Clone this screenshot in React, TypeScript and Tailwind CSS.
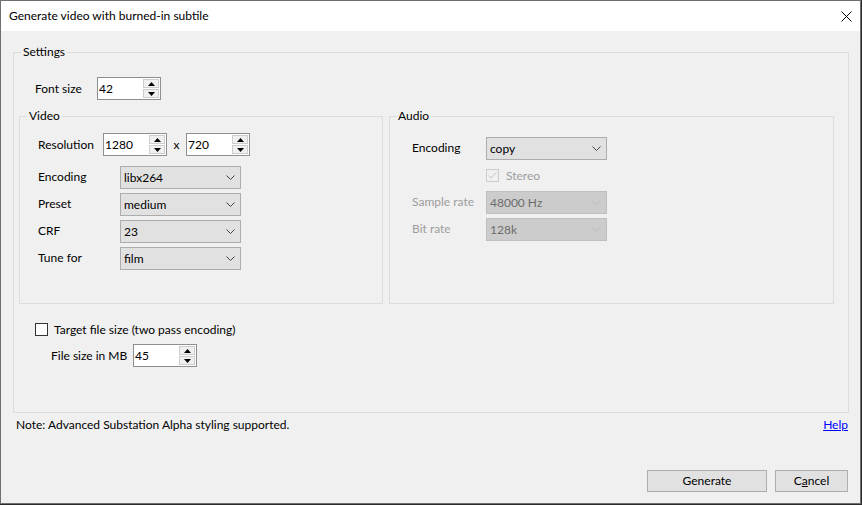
import type { ReactNode } from "react";

function Arrow({ up }: { up?: boolean }) {
  return (
    <svg width="7" height="4" viewBox="0 0 7 4" aria-hidden>
      <path d={up ? "M0 4 L3.5 0 L7 4 Z" : "M0 0 L3.5 4 L7 0 Z"} fill="#000" />
    </svg>
  );
}

function SpinBox({ value }: { value: string }) {
  return (
    <div className="flex h-[23px] w-[64px] border border-[#8f8f8f] bg-white">
      <span className="flex-1 pl-[1px] leading-[21px]">{value}</span>
      <div className="flex w-[17px] flex-col gap-[1px] py-[1px] pr-[1px]">
        <div className="flex flex-1 items-center justify-center border border-[#cdcdcd] bg-[#f0f0f0]">
          <Arrow up />
        </div>
        <div className="flex flex-1 items-center justify-center border border-[#cdcdcd] bg-[#f0f0f0]">
          <Arrow />
        </div>
      </div>
    </div>
  );
}

function Combo({ value, disabled }: { value: string; disabled?: boolean }) {
  return (
    <div
      className={
        disabled
          ? "flex h-[23px] w-[121px] items-center border border-[#bfbfbf] bg-[#cccccc] pl-[3px] pr-[5px] text-[#6d6d6d]"
          : "flex h-[23px] w-[121px] items-center border border-[#adadad] bg-[#e1e1e1] pl-[3px] pr-[5px]"
      }
    >
      <span className="flex-1 leading-[21px]">{value}</span>
      <svg width="9" height="5" viewBox="0 0 9 5" aria-hidden>
        <path d="M0.5 0.5 L4.5 4.5 L8.5 0.5" fill="none" stroke={disabled ? "#bcbcbc" : "#444"} strokeWidth="1" />
      </svg>
    </div>
  );
}

function Row({ label, children, w, muted }: { label: string; children: ReactNode; w: string; muted?: boolean }) {
  return (
    <div className="flex items-center">
      <span className={`${w} ${muted ? "text-[#9d9d9d]" : ""} -mt-[2px]`}>{label}</span>
      {children}
    </div>
  );
}

export default function App() {
  return (
    <div className="h-[505px] w-[862px] bg-[#2b2b2b] font-['Lato',sans-serif] text-[12px] leading-[16px] text-black">
      <div className="flex h-[504px] w-[861px] flex-col border border-[#6f6f6f] bg-[#f0f0f0]">
        <div className="flex h-[30px] items-center justify-between bg-white pl-[8px] pr-[8px]">
          <span>Generate video with burned-in subtile</span>
          <svg width="11" height="11" viewBox="0 0 11 11" aria-hidden>
            <path d="M0.5 0.5 L10.5 10.5 M10.5 0.5 L0.5 10.5" stroke="#000" strokeWidth="1" />
          </svg>
        </div>

        <div className="flex flex-col pl-[12px]">
          <fieldset className="mt-[13px] h-[369px] w-[836px] border border-[#dcdcdc]">
            <legend className="ml-[7px] px-[2px]">Settings</legend>

            <div className="mt-[17px] flex items-center pl-[21px]">
              <span className="w-[62px]">Font size</span>
              <SpinBox value="42" />
            </div>

            <div className="mt-[8px] flex gap-[6px] pl-[5px]">
              <fieldset className="h-[196px] w-[364px] border border-[#dcdcdc]">
                <legend className="ml-[7px] px-[2px]">Video</legend>
                <div className="mt-[9px] flex items-center pl-[18px]">
                  <span className="w-[65px]">Resolution</span>
                  <SpinBox value="1280" />
                  <span className="w-[19px] text-center">x</span>
                  <SpinBox value="720" />
                </div>
                <div className="mt-[10px] flex flex-col gap-[4px] pl-[18px]">
                  <Row label="Encoding" w="w-[82px]">
                    <Combo value="libx264" />
                  </Row>
                  <Row label="Preset" w="w-[82px]">
                    <Combo value="medium" />
                  </Row>
                  <Row label="CRF" w="w-[82px]">
                    <Combo value="23" />
                  </Row>
                  <Row label="Tune for" w="w-[82px]">
                    <Combo value="film" />
                  </Row>
                </div>
              </fieldset>

              <fieldset className="h-[196px] w-[445px] border border-[#dcdcdc]">
                <legend className="ml-[7px] px-[1px]">Audio</legend>
                <div className="mt-[13px] pl-[22px]">
                  <Row label="Encoding" w="w-[74px]">
                    <Combo value="copy" />
                  </Row>
                </div>
                <div className="mt-[9px] flex h-[13px] items-center gap-[7px] pl-[96px] text-[#9d9d9d]">
                  <span className="flex h-[13px] w-[13px] items-center justify-center border border-[#cccccc]">
                    <svg width="9" height="7" viewBox="0 0 9 7" aria-hidden>
                      <path d="M0.5 3.5 L3 6 L8.5 0.5" fill="none" stroke="#c2c2c2" strokeWidth="1" />
                    </svg>
                  </span>
                  <span>Stereo</span>
                </div>
                <div className="mt-[9px] flex flex-col gap-[4px] pl-[22px]">
                  <Row label="Sample rate" w="w-[74px]" muted>
                    <Combo value="48000 Hz" disabled />
                  </Row>
                  <Row label="Bit rate" w="w-[74px]" muted>
                    <Combo value="128k" disabled />
                  </Row>
                </div>
              </fieldset>
            </div>

            <div className="mt-[19px] flex h-[13px] items-center gap-[6px] pl-[21px]">
              <span className="h-[13px] w-[13px] border border-[#333333] bg-white" />
              <span>Target file size (two pass encoding)</span>
            </div>
            <div className="mt-[8px] flex items-center pl-[37px]">
              <span className="w-[82px]">File size in MB</span>
              <SpinBox value="45" />
            </div>
          </fieldset>

          <div className="mt-[4px] flex w-[835px] justify-between pl-[3px]">
            <span>Note: Advanced Substation Alpha styling supported.</span>
            <span className="text-[#0000ff] underline">Help</span>
          </div>

          <div className="mt-[37px] flex w-[835px] justify-end gap-[8px]">
            <button className="h-[22px] w-[120px] border border-[#adadad] bg-[#e1e1e1]">Generate</button>
            <button className="h-[22px] w-[73px] border border-[#adadad] bg-[#e1e1e1]">
              C<span className="underline">a</span>ncel
            </button>
          </div>
        </div>
      </div>
    </div>
  );
}
